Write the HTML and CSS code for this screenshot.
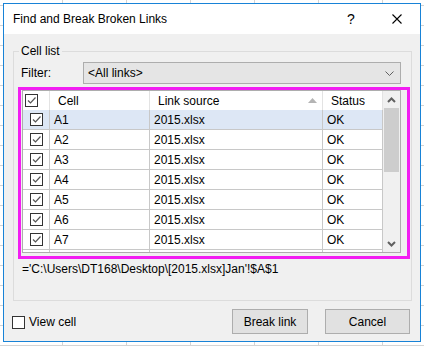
FILE: index.html
```html
<!DOCTYPE html>
<html lang="en">
  <head>
    <meta charset="UTF-8" />
    <meta name="viewport" content="width=device-width, initial-scale=1.0" />
    <title>Find and Break Broken Links</title>
    <link rel="stylesheet" href="styles.css">
  </head>
  <body>
    <div class="dialog">
      <!-- Title bar -->
      <div class="titlebar">
        <span class="title">Find and Break Broken Links</span>
        <span class="help">?</span>
        <span class="close">
          <svg width="10" height="10" viewBox="0 0 10 10">
            <path d="M0.5 0.5 L9.5 9.5 M9.5 0.5 L0.5 9.5" stroke="#000" stroke-width="1.1" fill="none" />
          </svg>
        </span>
      </div>

      <div class="content">
        <fieldset class="group">
          <legend>Cell list</legend>

          <!-- Filter dropdown -->
          <div class="filter-row">
            <label class="filter-label">Filter:</label>
            <div class="select">
              <span>&lt;All links&gt;</span>
              <svg class="chevron" width="9" height="5" viewBox="0 0 9 5">
                <path d="M0.5 0.5 L4.5 4.5 L8.5 0.5" stroke="#606060" stroke-width="1" fill="none" />
              </svg>
            </div>
          </div>

          <!-- Link list (highlighted) -->
          <div class="highlight">
            <div class="list">
              <div class="table">
                <div class="row head">
                  <div class="col c-check"><span class="box"><svg width="11" height="11" viewBox="0 0 11 11"><path d="M2 5.5 L4.5 8 L9.5 2.5" stroke="#555" stroke-width="1.2" fill="none" /></svg></span></div>
                  <div class="col c-cell">Cell</div>
                  <div class="col c-source">Link source
                    <svg class="sort" width="9" height="5" viewBox="0 0 9 5"><path d="M0 5 L4.5 0 L9 5 Z" fill="#b4b4b4" /></svg>
                  </div>
                  <div class="col c-status">Status</div>
                </div>
                <div id="rows"></div>
                <!-- next row, scrolled out of view -->
                <div class="row item">
                  <div class="col c-check"></div>
                  <div class="col c-cell"></div>
                  <div class="col c-source"></div>
                  <div class="col c-status"></div>
                </div>
              </div>
              <div class="scrollbar">
                <div class="arrow">
                  <svg width="9" height="6" viewBox="0 0 9 6"><path d="M1 5 L4.5 1.5 L8 5" stroke="#606060" stroke-width="2" fill="none" /></svg>
                </div>
                <div class="thumb"></div>
                <div class="track"></div>
                <div class="arrow">
                  <svg width="9" height="6" viewBox="0 0 9 6"><path d="M1 1 L4.5 4.5 L8 1" stroke="#606060" stroke-width="2" fill="none" /></svg>
                </div>
              </div>
            </div>
          </div>

          <div class="path">='C:\Users\DT168\Desktop\[2015.xlsx]Jan'!$A$1</div>
        </fieldset>

        <!-- Footer -->
        <div class="footer">
          <label class="view-cell"><span class="box blank"></span>View cell</label>
          <button class="btn btn-break">Break link</button>
          <button class="btn btn-cancel">Cancel</button>
        </div>
      </div>
    </div>

    <script src="script.js"></script>
  </body>
</html>
```

FILE: script.js
```javascript
// Build the link rows
const rows = document.getElementById("rows");
const cells = ["A1", "A2", "A3", "A4", "A5", "A6", "A7"];

cells.forEach((cell, i) => {
  const row = document.createElement("div");
  row.className = i === 0 ? "row item selected" : "row item";
  row.innerHTML =
    '<div class="col c-check"><span class="box"><svg width="11" height="11" viewBox="0 0 11 11">' +
    '<path d="M2 5.5 L4.5 8 L9.5 2.5" stroke="#555" stroke-width="1.2" fill="none" /></svg></span></div>' +
    '<div class="col c-cell">' + cell + "</div>" +
    '<div class="col c-source">2015.xlsx</div>' +
    '<div class="col c-status">OK</div>';
  rows.appendChild(row);
});
```

FILE: styles.css
```css
* {
  box-sizing: border-box;
}

/* Sheet behind the dialog */
body {
  margin: 0;
  width: 424px;
  height: 346px;
  overflow: hidden;
  font-family: "Liberation Sans", Arial, sans-serif;
  font-size: 12px;
  color: #000;
  background-color: #fff;
  background-image:
    linear-gradient(to right, #d4d4d4 1px, transparent 1px),
    linear-gradient(to bottom, #d4d4d4 1px, transparent 1px);
  background-size: 64px 100%, 100% 20px;
  background-position: 62px 0, 0 5px;
}

/* Dialog window */
.dialog {
  margin: 3px 0 0 3px;
  width: 418px;
  height: 339px;
  border: 1px solid #1883d7;
  background: #f0f0f0;
  display: flex;
  flex-direction: column;
}

.titlebar {
  height: 30px;
  background: #fff;
  display: flex;
  align-items: center;
  padding-left: 9px;
  flex-shrink: 0;
}
.title {
  flex: 1;
  font-size: 12px;
}
.help {
  width: 46px;
  text-align: center;
  font-size: 14px;
}
.close {
  width: 46px;
  height: 30px;
  display: flex;
  align-items: center;
  justify-content: center;
}

.content {
  padding: 10px 8px 0 9px;
}

/* Group box */
.group {
  margin: 0;
  border: 1px solid #dcdcdc;
  padding: 0 1px 0 4px;
  min-width: 0;
}
.group legend {
  padding: 0 2px;
  margin-left: 1px;
  line-height: 14px;
}

.filter-row {
  display: flex;
  align-items: center;
  height: 22px;
  margin: 4px 9px 0 3px;
}
.filter-label {
  width: 62px;
}
.select {
  flex: 1;
  height: 22px;
  border: 1px solid #adadad;
  background: #e5e5e5;
  display: flex;
  align-items: center;
  justify-content: space-between;
  padding: 0 6px 0 4px;
}

/* Magenta highlight around the list */
.highlight {
  margin-top: 3px;
  border: 3px solid #f21ef2;
  padding: 0 6px 3px 1px;
}

.list {
  height: 163px;
  border: 1px solid #adadad;
  background: #fff;
  display: flex;
  overflow: hidden;
}
.table {
  flex: 1;
  overflow: hidden;
}

.row {
  display: flex;
  height: 20px;
  border-bottom: 1px solid #c8c8c8;
}
.row.head {
  height: 19px;
  border-bottom: none;
}
.row.selected {
  background: #dde7f5;
}
.col {
  display: flex;
  align-items: center;
  border-right: 1px solid #c8c8c8;
  padding-left: 4px;
  white-space: nowrap;
}
.head .col {
  border-right-color: #e3e3e3;
  padding-left: 8px;
}
.c-check {
  width: 27px;
  padding-left: 7px;
}
.head .c-check {
  padding-left: 2px;
}
.c-cell {
  width: 100px;
}
.c-source {
  width: 173px;
}
.head .c-source {
  justify-content: space-between;
  padding-right: 5px;
}
.sort {
  margin-top: -1px;
}
.c-status {
  width: 60px;
}

.box {
  width: 13px;
  height: 13px;
  border: 1px solid #333;
  background: #fff;
  display: flex;
  align-items: center;
  justify-content: center;
}

/* Scrollbar */
.scrollbar {
  width: 17px;
  background: #f0f0f0;
  display: flex;
  flex-direction: column;
  align-items: center;
}
.arrow {
  height: 17px;
  display: flex;
  align-items: center;
  justify-content: center;
}
.thumb {
  width: 15px;
  height: 64px;
  background: #cdcdcd;
}
.track {
  flex: 1;
}

.path {
  margin: 3px 0 24px 4px;
  line-height: 14px;
}

/* Footer */
.footer {
  display: flex;
  align-items: center;
  margin: 8px 2px 0 -1px;
}
.view-cell {
  display: flex;
  align-items: center;
  gap: 4px;
  margin-right: auto;
  margin-top: 1px;
}
.btn {
  height: 25px;
  border: 1px solid #adadad;
  background: #e1e1e1;
  font-family: "Liberation Sans", Arial, sans-serif;
  font-size: 12px;
  color: #000;
  padding: 0;
}
.btn-break {
  width: 76px;
  margin-right: 17px;
}
.btn-cancel {
  width: 85px;
}
```
